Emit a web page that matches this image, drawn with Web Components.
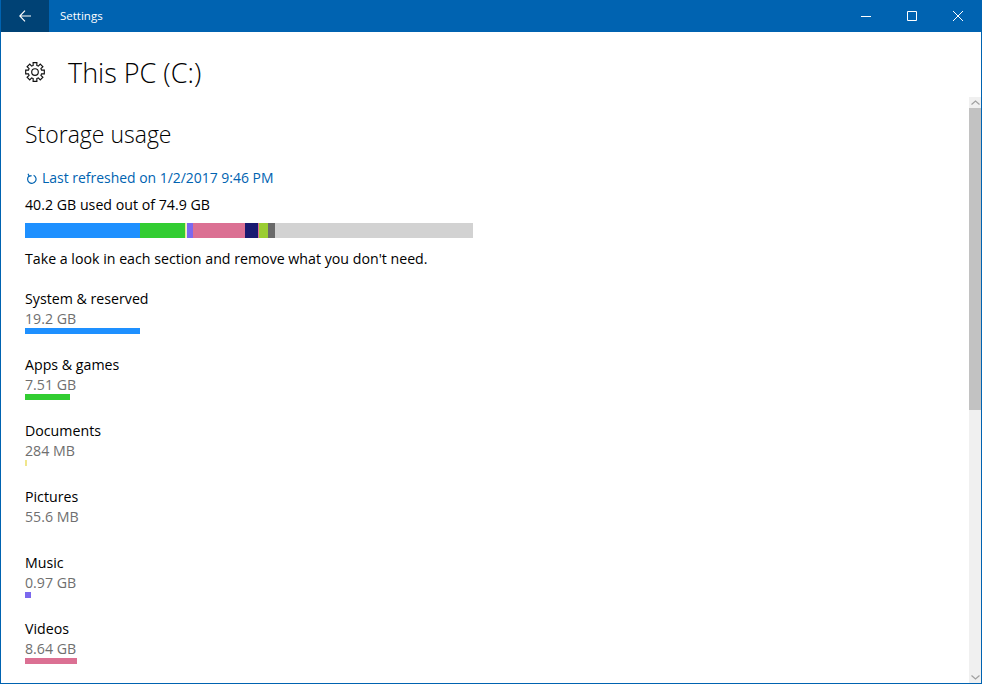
<!DOCTYPE html>
<html>
<head>
<meta charset="utf-8">
<title>Settings</title>
<style>
html, body { margin: 0; height: 100%; overflow: hidden; background: #fff; }
body { font-family: "Open Sans", "Liberation Sans", sans-serif; color: #000; }
</style>
</head>
<body>
<settings-window>
  <title-bar slot="top">Settings</title-bar>
  <page-header>This PC (C:)</page-header>
  <storage-summary></storage-summary>
  <usage-row name="System &amp; reserved" size="19.2 GB" width="115" color="#1e90ff"></usage-row>
  <usage-row name="Apps &amp; games" size="7.51 GB" width="45" color="#32cd32"></usage-row>
  <usage-row name="Documents" size="284 MB" width="2" color="#f0e68c"></usage-row>
  <usage-row name="Pictures" size="55.6 MB" width="0" color="#db7093"></usage-row>
  <usage-row name="Music" size="0.97 GB" width="6" color="#7b68ee"></usage-row>
  <usage-row name="Videos" size="8.64 GB" width="52" color="#db7093"></usage-row>
  <scroll-bar slot="scroll"></scroll-bar>
</settings-window>

<script>
// settings-window
class SettingsWindow extends HTMLElement {
    constructor() {
        super();
        this.attachShadow({ mode: 'open' });
        this.shadowRoot.innerHTML = `
            <style>
                :host {
                    display: flex;
                    flex-direction: column;
                    box-sizing: border-box;
                    width: 982px;
                    height: 684px;
                    border: 1px solid #0063b1;
                    border-top: 0;
                    overflow: hidden;
                }
                .body {
                    flex: 1;
                    display: flex;
                    min-height: 0;
                }
                .content {
                    flex: 1;
                    padding: 0 0 0 24px;
                    overflow: hidden;
                }
                .side {
                    width: 12px;
                    padding-top: 65px;
                    display: flex;
                }
            </style>
            <slot name="top"></slot>
            <div class="body">
                <div class="content"><slot></slot></div>
                <div class="side"><slot name="scroll"></slot></div>
            </div>
        `;
    }
}
customElements.define('settings-window', SettingsWindow);

// title-bar
class TitleBar extends HTMLElement {
    constructor() {
        super();
        this.attachShadow({ mode: 'open' });
        this.shadowRoot.innerHTML = `
            <style>
                :host {
                    display: flex;
                    align-items: stretch;
                    height: 32px;
                    flex: none;
                    background: #0063b1;
                    color: #fff;
                    font-size: 11.5px;
                    margin: 0 -1px;
                    padding-right: 1px;
                }
                .back {
                    width: 49px;
                    background: #004275;
                    display: flex;
                    align-items: center;
                    justify-content: center;
                }
                .title {
                    flex: 1;
                    padding-left: 11px;
                    line-height: 32px;
                }
                .btn {
                    width: 46px;
                    display: flex;
                    align-items: center;
                    justify-content: center;
                }
                svg { display: block; }
            </style>
            <div class="back">
                <svg width="12" height="12" viewBox="0 0 12 12" fill="none" stroke="#fff" stroke-width="1.1"><path d="M12 6H1M6 .6L.8 6 6 11.4"/></svg>
            </div>
            <div class="title"><slot></slot></div>
            <div class="btn"><svg width="10" height="10" viewBox="0 0 10 10" stroke="#fff"><path d="M0 5.5h10"/></svg></div>
            <div class="btn"><svg width="10" height="10" viewBox="0 0 10 10" fill="none" stroke="#fff"><path d="M.5.5h9v9h-9z"/></svg></div>
            <div class="btn"><svg width="10" height="10" viewBox="0 0 10 10" stroke="#fff" stroke-width="1"><path d="M0 0l10 10M10 0L0 10"/></svg></div>
        `;
    }
}
customElements.define('title-bar', TitleBar);

// page-header
class PageHeader extends HTMLElement {
    constructor() {
        super();
        this.attachShadow({ mode: 'open' });
        let d = '';
        for (let i = 0; i < 8; i++) {
            const a = i * Math.PI / 4;
            const pt = (r, off) => {
                const x = 10 + r * Math.cos(a + off);
                const y = 10 + r * Math.sin(a + off);
                return x.toFixed(2) + ' ' + y.toFixed(2);
            };
            d += (i ? 'L' : 'M') + pt(6.8, -0.27) + 'L' + pt(9.5, -0.2) + 'L' + pt(9.5, 0.2) + 'L' + pt(6.8, 0.27);
        }
        this.shadowRoot.innerHTML = `
            <style>
                :host {
                    display: flex;
                    align-items: center;
                    height: 34px;
                    margin-top: 23px;
                    font-size: 27px;
                    font-weight: 300;
                    color: #000;
                }
                svg { display: block; margin-right: 23px; }
            </style>
            <svg width="20" height="20" viewBox="0 0 20 20" fill="none" stroke="#111" stroke-width="1.15">
                <path d="${d}Z"/>
                <circle cx="10" cy="10" r="3.3"/>
            </svg>
            <slot></slot>
        `;
    }
}
customElements.define('page-header', PageHeader);

// storage-summary
class StorageSummary extends HTMLElement {
    constructor() {
        super();
        this.attachShadow({ mode: 'open' });
        const parts = [
            [115, '#1e90ff'], [45, '#32cd32'], [1, '#f0e68c'], [1, '#e4f4d8'], [6, '#7b68ee'],
            [52, '#db7093'], [13, '#191970'], [1, '#db7093'], [9, '#9acd32'], [7, '#696969']
        ];
        this.shadowRoot.innerHTML = `
            <style>
                :host {
                    display: block;
                    font-size: 14.2px;
                    width: 448px;
                    margin-bottom: 20px;
                }
                h2 {
                    margin: 0;
                    padding-top: 31px;
                    font-size: 23px;
                    font-weight: 300;
                    line-height: 28px;
                    color: #000;
                }
                .link {
                    margin-top: 20px;
                    display: flex;
                    align-items: center;
                    gap: 5px;
                    color: #0063b1;
                    font-size: 13.95px;
                    line-height: 20px;
                }
                .link svg { display: block; margin-left: 2px; }
                .used { margin-top: 7px; line-height: 20px; }
                .bar {
                    display: flex;
                    height: 15px;
                    margin-top: 8px;
                    background: #d2d2d2;
                }
                .bar span { display: block; height: 100%; }
                .tip { margin-top: 11px; line-height: 20px; }
            </style>
            <h2>Storage usage</h2>
            <div class="link">
                <svg width="10" height="11" viewBox="0 0 10 11" fill="none" stroke="#0063b1" stroke-width="1.2">
                    <path d="M6.6 2.3A4.2 4.2 0 1 1 1.8 3.2"/><path d="M1 .8L2.2 3.2 4.6 2.6"/>
                </svg>
                <span>Last refreshed on 1/2/2017 9:46 PM</span>
            </div>
            <div class="used">40.2 GB used out of 74.9 GB</div>
            <div class="bar">
                ${parts.map(p => `<span style="width:${p[0]}px;background:${p[1]}"></span>`).join('')}
            </div>
            <div class="tip">Take a look in each section and remove what you don't need.</div>
        `;
    }
}
customElements.define('storage-summary', StorageSummary);

// usage-row
class UsageRow extends HTMLElement {
    constructor() {
        super();
        this.attachShadow({ mode: 'open' });
        this.shadowRoot.innerHTML = `
            <style>
                :host {
                    display: block;
                    font-size: 14.2px;
                    margin-bottom: 21px;
                }
                .name { line-height: 20px; }
                .size { line-height: 19px; color: #6f6f6f; }
                .line { height: 6px; }
            </style>
            <div class="name">${this.getAttribute('name').replace(/&/g, '&amp;')}</div>
            <div class="size">${this.getAttribute('size')}</div>
            <div class="line" style="width:${this.getAttribute('width')}px;background:${this.getAttribute('color')}"></div>
        `;
    }
}
customElements.define('usage-row', UsageRow);

// scroll-bar
class ScrollBar extends HTMLElement {
    constructor() {
        super();
        this.attachShadow({ mode: 'open' });
        this.shadowRoot.innerHTML = `
            <style>
                :host {
                    display: flex;
                    flex-direction: column;
                    width: 12px;
                    background: #f0f0f0;
                }
                .arrow {
                    height: 11px;
                    display: flex;
                    align-items: center;
                    justify-content: center;
                }
                .thumb { height: 302px; background: #c2c2c2; }
                .track { flex: 1; }
                svg { display: block; }
            </style>
            <div class="arrow"><svg width="9" height="5" viewBox="0 0 9 5" fill="none" stroke="#a0a0a0" stroke-width="1.2"><path d="M.5 4.5l4-3.5 4 3.5"/></svg></div>
            <div class="thumb"></div>
            <div class="track"></div>
            <div class="arrow"><svg width="9" height="5" viewBox="0 0 9 5" fill="none" stroke="#a0a0a0" stroke-width="1.2"><path d="M.5 .5l4 3.5 4-3.5"/></svg></div>
        `;
    }
}
customElements.define('scroll-bar', ScrollBar);
</script>
</body>
</html>
